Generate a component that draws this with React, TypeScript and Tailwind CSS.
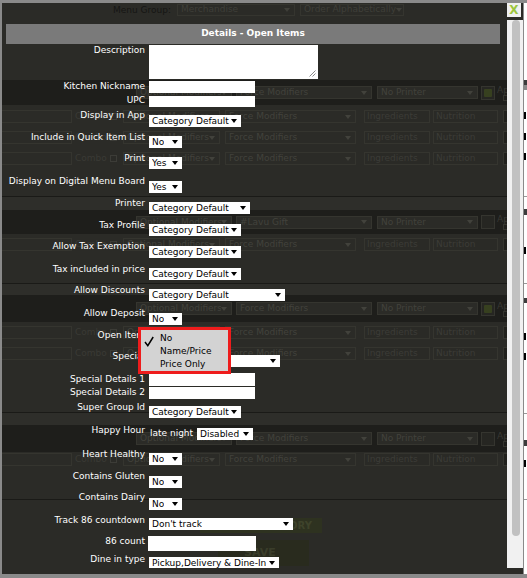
import React from "react";

const Arrow = ({ c = "#000" }: { c?: string }) => (
  <svg width="6" height="4" viewBox="0 0 6 4" className="shrink-0">
    <polygon points="0,0 6,0 3,4" fill={c} />
  </svg>
);

function Sel({ text, w, mt }: { text: string; w: string; mt: string }) {
  return (
    <div
      className={`flex items-start justify-between bg-white h-[12px] pl-[3px] pr-[4px] text-[9px] leading-[12px] text-black ${w} ${mt}`}
    >
      <span className="whitespace-nowrap overflow-hidden">{text}</span>
      <div className="h-full flex items-center">
        <Arrow />
      </div>
    </div>
  );
}

function Inp({ w, h, mt }: { w: string; h: string; mt: string }) {
  return <div className={`bg-white ${w} ${h} ${mt}`} />;
}

function Row({ label, h, children }: { label: string; h: string; children?: React.ReactNode }) {
  return (
    <div className={`flex items-start shrink-0 ${h}`}>
      <div className="w-[143px] shrink-0 text-right text-white text-[9px] leading-[11px] whitespace-nowrap">
        {label}
      </div>
      <div className="ml-[4px] flex items-start">{children}</div>
    </div>
  );
}

/* ---------- dimmed page behind the dialog ---------- */

function DimSel({ text, w, ml }: { text: string; w: string; ml: string }) {
  return (
    <div
      className={`flex items-center justify-between h-[13px] border border-[#35352f] bg-[#2b2b27] pl-[3px] pr-[4px] text-[9px] leading-[11px] text-[#42423c] shrink-0 overflow-hidden ${w} ${ml}`}
    >
      <span className="whitespace-nowrap overflow-hidden">{text}</span>
      <Arrow c="#42423c" />
    </div>
  );
}

function DimBox({ text, w, ml }: { text: string; w: string; ml: string }) {
  return (
    <div
      className={`flex items-center h-[13px] border border-[#35352f] bg-[#2a2a26] pl-[2px] text-[9px] leading-[11px] text-[#3c3c37] shrink-0 overflow-hidden whitespace-nowrap ${w} ${ml}`}
    >
      {text}
    </div>
  );
}

function DimBand({ h, second, icon }: { h: string; second: string; icon: boolean }) {
  return (
    <div className={`flex items-center bg-[#1e1e1b] shrink-0 ${h}`}>
      <DimSel text="Optional Modifiers" w="w-[96px]" ml="ml-[134px]" />
      <DimSel text={second} w="w-[136px]" ml="ml-[4px]" />
      <DimSel text="No Printer" w="w-[101px]" ml="ml-[5px]" />
      <div className="ml-[3px] w-[14px] h-[14px] border border-[#35352f] bg-[#262622] flex items-center justify-center shrink-0">
        {icon ? <div className="w-[8px] h-[8px] bg-[#37401f] rounded-[1px]" /> : null}
      </div>
      <div className="ml-[2px] flex flex-col items-start shrink-0">
        <span className="text-[9px] leading-[10px] text-[#383833]">Ap</span>
        <div className="ml-[6px] w-[5px] h-[6px] border border-[#35352f]" />
      </div>
    </div>
  );
}

function DimRow({ pt }: { pt: string }) {
  return (
    <div className={`flex items-start h-[21px] shrink-0 ${pt}`}>
      <div className="w-[70px] h-[13px] border border-[#35352f] border-l-0 shrink-0" />
      <span className="ml-[3px] w-[32px] text-[9px] leading-[13px] text-[#3a3a35] shrink-0">Combo</span>
      <div className="ml-[3px] mt-[3px] w-[7px] h-[7px] border border-[#3c3c37] shrink-0" />
      <DimSel text="Optional Modifiers" w="w-[97px]" ml="ml-[6px]" />
      <DimSel text="Force Modifiers" w="w-[131px]" ml="ml-[5px]" />
      <DimBox text="Ingredients" w="w-[66px]" ml="ml-[8px]" />
      <DimBox text="Nutrition" w="w-[65px]" ml="ml-[3px]" />
      <div className="ml-[5px] w-[10px] h-[13px] border border-[#35352f] bg-[#20201c] shrink-0" />
    </div>
  );
}

function DimPage() {
  return (
    <div className="flex flex-col w-full h-full">
      <div className="flex items-start h-[17px] pt-[1px] shrink-0">
        <span className="ml-[111px] w-[57px] text-[9px] leading-[12px] text-[#161614] whitespace-nowrap">
          Menu Group:
        </span>
        <div className="ml-[7px] w-[118px] h-[12px] border border-[#35352f] flex items-center justify-between pl-[3px] pr-[4px] text-[9px] text-[#3f3f39]">
          <span>Merchandise</span>
          <Arrow c="#3f3f39" />
        </div>
        <div className="ml-[5px] w-[104px] h-[12px] border border-[#35352f] flex items-center justify-between pl-[3px] pr-[4px] text-[9px] text-[#3f3f39]">
          <span className="whitespace-nowrap">Order Alphabetically</span>
          <Arrow c="#3f3f39" />
        </div>
      </div>
      <div className="h-[60px] shrink-0" />
      <DimBand h="h-[25px]" second="Force Modifiers" icon />
      <DimRow pt="pt-[5px]" />
      <DimRow pt="pt-[5px]" />
      <DimRow pt="pt-[5px]" />
      <div className="h-[28px] shrink-0" />
      <div className="h-[1px] bg-[#1a1a17] shrink-0" />
      <div className="h-[13px] bg-[#2e2e2a] shrink-0" />
      <DimBand h="h-[24px]" second="#Lavu Gift" icon={false} />
      <DimRow pt="pt-[4px]" />
      <div className="h-[28px] shrink-0" />
      <div className="h-[1px] bg-[#1a1a17] shrink-0" />
      <div className="h-[11px] bg-[#2e2e2a] shrink-0" />
      <DimBand h="h-[27px]" second="Force Modifiers" icon />
      <DimRow pt="pt-[4px]" />
      <DimRow pt="pt-[4px]" />
      <div className="h-[48px] shrink-0" />
      <div className="h-[1px] bg-[#1a1a17] shrink-0" />
      <div className="h-[12px] bg-[#2e2e2a] shrink-0" />
      <DimBand h="h-[27px]" second="Force Modifiers" icon={false} />
      <DimRow pt="pt-[1px]" />
      <div className="h-[26px] shrink-0" />
      <div className="h-[1px] bg-[#1a1a17] shrink-0" />
      <div className="h-[18px] shrink-0" />
      <div className="flex h-[15px] shrink-0">
        <div className="ml-[198px] w-[122px] h-full bg-[#2e3220] flex items-center justify-end pr-[10px] text-[10px] font-bold text-[#3e432b]">
          CATEGORY
        </div>
      </div>
      <div className="h-[7px] shrink-0" />
      <div className="flex h-[26px] shrink-0">
        <div className="ml-[216px] w-[91px] h-full bg-[#292b1e] flex items-center pl-[26px] text-[11px] font-bold text-[#3a3d2a]">
          SAVE
        </div>
      </div>
    </div>
  );
}

/* ---------- dialog form ---------- */

function Form() {
  return (
    <div className="relative w-[505px] h-full overflow-hidden flex flex-col shrink-0">
      <div className="mt-[4px] ml-[4px] w-[494px] h-[20px] bg-[#7a7a7a] flex items-center justify-center text-white font-bold text-[9px] shrink-0">
        Details - Open Items
      </div>
      <div className="mt-[1px] flex flex-col">
        <Row label="Description" h="h-[36px]">
          <div className="w-[169px] h-[34px] bg-white flex items-end justify-end p-[2px]">
            <svg width="7" height="7" viewBox="0 0 7 7">
              <line x1="0.5" y1="6.5" x2="6.5" y2="0.5" stroke="#8a8a8a" strokeWidth="1" />
              <line x1="3.5" y1="6.5" x2="6.5" y2="3.5" stroke="#8a8a8a" strokeWidth="1" />
            </svg>
          </div>
        </Row>
        <Row label="Kitchen Nickname" h="h-[14px]">
          <Inp w="w-[106px]" h="h-[12px]" mt="mt-0" />
        </Row>
        <Row label="UPC" h="h-[15px]">
          <Inp w="w-[106px]" h="h-[11px]" mt="mt-[1px]" />
        </Row>
        <Row label="Display in App" h="h-[22px]">
          <Sel text="Category Default" w="w-[92px]" mt="mt-[5px]" />
        </Row>
        <Row label="Include in Quick Item List" h="h-[21px]">
          <Sel text="No" w="w-[33px]" mt="mt-[4px]" />
        </Row>
        <Row label="Print" h="h-[23px]">
          <Sel text="Yes" w="w-[33px]" mt="mt-[4px]" />
        </Row>
        <Row label="Display on Digital Menu Board" h="h-[22px]">
          <Sel text="Yes" w="w-[33px]" mt="mt-[5px]" />
        </Row>
        <Row label="Printer" h="h-[22px]">
          <Sel text="Category Default" w="w-[101px]" mt="mt-[4px]" />
        </Row>
        <Row label="Tax Profile" h="h-[21px]">
          <Sel text="Category Default" w="w-[92px]" mt="mt-[4px]" />
        </Row>
        <Row label="Allow Tax Exemption" h="h-[23px]">
          <Sel text="Category Default" w="w-[92px]" mt="mt-[5px]" />
        </Row>
        <Row label="Tax included in price" h="h-[21px]">
          <Sel text="Category Default" w="w-[92px]" mt="mt-[4px]" />
        </Row>
        <Row label="Allow Discounts" h="h-[23px]">
          <Sel text="Category Default" w="w-[136px]" mt="mt-[4px]" />
        </Row>
        <Row label="Allow Deposit" h="h-[22px]">
          <Sel text="No" w="w-[33px]" mt="mt-[5px]" />
        </Row>
        <Row label="Open Item" h="h-[21px]">
          <Sel text="No" w="w-[33px]" mt="mt-[4px]" />
        </Row>
        <Row label="Special" h="h-[23px]">
          <Sel text="" w="w-[131px]" mt="mt-[4px]" />
        </Row>
        <Row label="Special Details 1" h="h-[13px]">
          <Inp w="w-[106px]" h="h-[13px]" mt="-mt-[1px]" />
        </Row>
        <Row label="Special Details 2" h="h-[15px]">
          <Inp w="w-[106px]" h="h-[12px]" mt="mt-0" />
        </Row>
        <Row label="Super Group Id" h="h-[23px]">
          <Sel text="Category Default" w="w-[92px]" mt="mt-[4px]" />
        </Row>
        <Row label="Happy Hour" h="h-[24px]">
          <span className="mt-[3px] ml-[1px] text-white text-[9px] leading-[11px] whitespace-nowrap w-[43px]">
            late night
          </span>
          <div className="ml-[4px]">
            <Sel text="Disabled" w="w-[56px]" mt="mt-[3px]" />
          </div>
        </Row>
        <Row label="Heart Healthy" h="h-[22px]">
          <Sel text="No" w="w-[33px]" mt="mt-[4px]" />
        </Row>
        <Row label="Contains Gluten" h="h-[21px]">
          <Sel text="No" w="w-[33px]" mt="mt-[5px]" />
        </Row>
        <Row label="Contains Dairy" h="h-[23px]">
          <Sel text="No" w="w-[33px]" mt="mt-[6px]" />
        </Row>
        <Row label="Track 86 countdown" h="h-[21px]">
          <Sel text="Don't track" w="w-[144px]" mt="mt-[3px]" />
        </Row>
        <Row label="86 count" h="h-[18px]">
          <div className="-ml-[1px] w-[108px] h-[15px] bg-white" />
        </Row>
        <Row label="Dine in type" h="h-[20px]">
          <Sel text="Pickup,Delivery & Dine-In" w="w-[130px]" mt="mt-[3px]" />
        </Row>
      </div>

      {/* open select menu */}
      <div className="absolute left-[136px] top-[307px] w-[93px] h-[47px] border-[3px] border-[#ee1c1c] bg-[#d3d3d3] pt-[2px] flex flex-col">
        <div className="h-[13px] flex items-center">
          <svg width="10" height="11" viewBox="0 0 10 11" className="ml-[3px] mt-[5px]">
            <polyline points="1,6 3.8,9.6 9.2,1" fill="none" stroke="#000" strokeWidth="1.5" />
          </svg>
          <span className="ml-[6px] text-[9px] leading-[13px] text-black">No</span>
        </div>
        <div className="h-[13px] pl-[19px] text-[9px] leading-[13px] text-black whitespace-nowrap">Name/Price</div>
        <div className="h-[13px] pl-[19px] text-[9px] leading-[13px] text-black whitespace-nowrap">Price Only</div>
      </div>
    </div>
  );
}

function RightStrip() {
  return (
    <div className="w-[3px] h-full bg-white flex flex-col shrink-0 overflow-hidden">
      <div className="h-[3px] bg-[#8a8a8a] shrink-0" />
      <div className="h-[77px] shrink-0" />
      <div className="h-[5px] bg-[#3c3c3c] shrink-0" />
      <div className="h-[5px] bg-[#8a8a8a] shrink-0" />
      <div className="h-[22px] shrink-0" />
      <div className="h-[7px] w-[2px] bg-black shrink-0" />
      <div className="h-[14px] shrink-0" />
      <div className="h-[7px] w-[2px] bg-black shrink-0" />
      <div className="h-[13px] shrink-0" />
      <div className="h-[7px] w-[2px] bg-black shrink-0" />
      <div className="h-[36px] shrink-0" />
      <div className="h-[1px] bg-[#999] shrink-0" />
      <div className="h-[12px] shrink-0" />
      <div className="h-[6px] bg-[#3c3c3c] shrink-0" />
      <div className="h-[32px] shrink-0" />
      <div className="h-[7px] w-[2px] bg-black shrink-0" />
      <div className="h-[29px] shrink-0" />
      <div className="h-[1px] bg-[#999] shrink-0" />
      <div className="h-[14px] shrink-0" />
      <div className="h-[5px] bg-[#3c3c3c] shrink-0" />
      <div className="h-[30px] shrink-0" />
      <div className="h-[7px] w-[2px] bg-black shrink-0" />
      <div className="h-[13px] shrink-0" />
      <div className="h-[7px] w-[2px] bg-black shrink-0" />
      <div className="h-[53px] shrink-0" />
      <div className="h-[1px] bg-[#999] shrink-0" />
      <div className="h-[26px] shrink-0" />
      <div className="h-[6px] bg-[#3c3c3c] shrink-0" />
      <div className="h-[14px] shrink-0" />
      <div className="h-[7px] w-[2px] bg-black shrink-0" />
      <div className="h-[32px] shrink-0" />
      <div className="h-[1px] bg-[#999] shrink-0" />
      <div className="flex-1" />
      <div className="h-[4px] bg-[#8a8a8a] shrink-0" />
    </div>
  );
}

export default function App() {
  return (
    <div className="w-[527px] h-[578px] overflow-hidden bg-white flex font-['DejaVu_Sans',sans-serif]">
      <div className="w-[524px] h-full bg-[#8a8a8a] pt-[3px] pl-[2px] pr-[1px] pb-[4px] shrink-0">
        <div className="relative w-[521px] h-[571px] bg-[#2b2b27] overflow-hidden">
          <DimPage />
          <div className="absolute inset-0 flex flex-col">
            <div className="h-[17px] flex justify-end shrink-0">
              <div className="mr-[2px] w-[14px] h-[14px] bg-[#f0f0f0] flex items-center justify-center text-[12px] leading-[12px] font-bold text-[#9bc53d]">
                X
              </div>
            </div>
            <div className="h-[548px] flex shrink-0">
              <Form />
              <div className="w-[16px] h-full bg-[#f1f1f1] flex pl-[5px] shrink-0">
                <div className="w-[8px] h-[516px] rounded-full bg-[#c1c1c1]" />
              </div>
            </div>
          </div>
        </div>
      </div>
      <RightStrip />
    </div>
  );
}
